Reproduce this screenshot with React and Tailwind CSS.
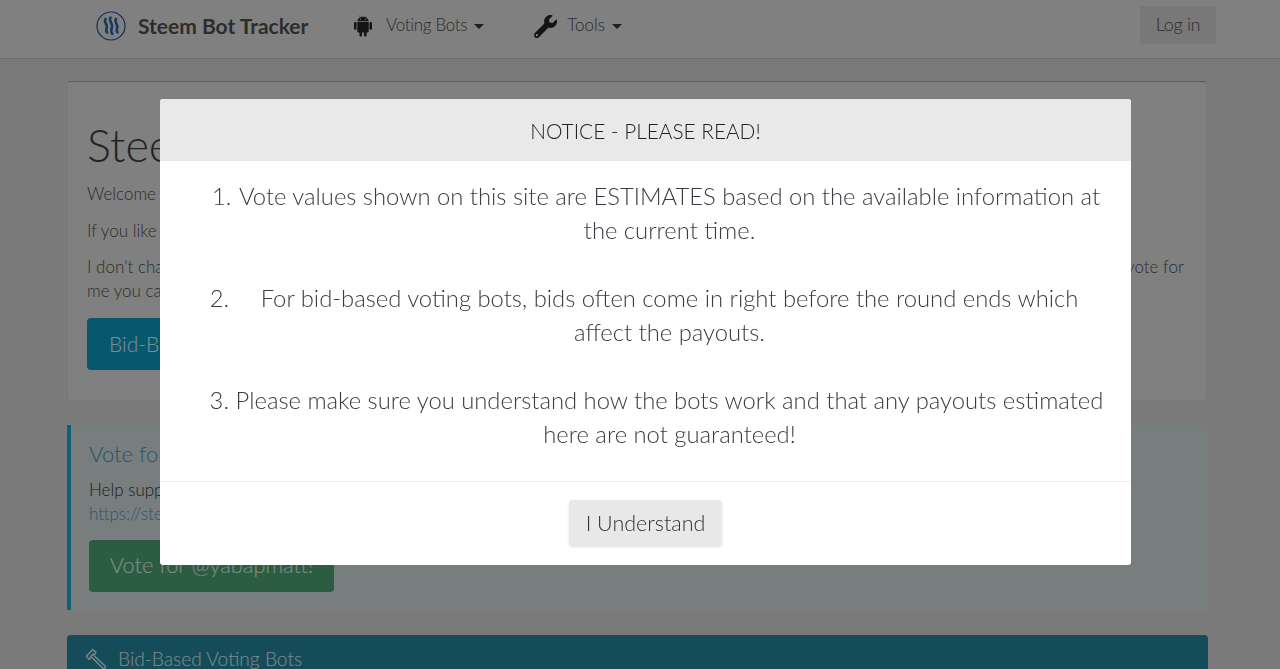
import { AiFillAndroid } from 'react-icons/ai'
import { FaWrench } from 'react-icons/fa'

function Caret() {
  return <span className="ml-[7px] inline-block border-x-[5px] border-t-[5px] border-x-transparent border-t-[#333] align-middle" />
}

function SteemLogo() {
  return (
    <svg viewBox="0 0 30 30" className="w-[30px] h-[30px]">
      <circle cx="15" cy="15" r="14" fill="none" stroke="#1f4f86" strokeWidth="1.2" />
      <g fill="none" stroke="#24609f" strokeLinecap="round" strokeWidth="2.600">
        <path d="M9.500 8c-2.500 3 3 6 1 9.500-.6 1.200-.4 2.500.6 4" />
        <path d="M14.500 6.500c-2.500 3.500 3.500 6.500 1.200 10.500-.8 1.600-.6 3.500.6 6" />
        <path d="M20 8c-2.500 3 3 6 1 9.500-.6 1.200-.4 2.500.6 4" />
      </g>
    </svg>
  )
}

function HammerIcon() {
  return (
    <svg viewBox="0 0 22 22" className="w-[22px] h-[22px]" fill="none" stroke="currentColor" strokeWidth="1.4" strokeLinejoin="round">
      <path d="M1.500 8 8 1.500l3 3-2.200 2.200-.8-.4-2.600 2.600.3.900L3.900 11.400z" />
      <path d="m9 7.500 11 10.500a1.500 1.500 0 0 1-2.200 2.200L7 9.500" />
    </svg>
  )
}

function Navbar() {
  return (
    <nav className="h-[59px] bg-[#d5d5d5] border-b border-[#b8b8b8] flex items-center pl-[96px] pr-[64px] pb-[6px] text-[17px] tracking-[-0.3px] text-[#4a4a4a]">
      <SteemLogo />
      <span className="ml-[12px] w-[215px] text-[21px] tracking-normal font-bold text-[#4b4b4b]">Steem Bot Tracker</span>
      <AiFillAndroid className="w-[24px] h-[26px] -ml-[2px] text-[#222]" />
      <span className="ml-[11px] -mt-[2px] font-light">Voting Bots</span>
      <Caret />
      <FaWrench className="ml-[50px] w-[23px] h-[23px] text-[#222]" />
      <span className="ml-[10px] -mt-[2px] font-light tracking-normal">Tools</span>
      <Caret />
      <button className="ml-auto -mt-[2px] w-[76px] h-[38px] pb-[1px] bg-[#c8c8c8] text-[18px] font-light text-[#4a4a4a]">Log in</button>
    </nav>
  )
}

function Jumbotron() {
  return (
    <section className="h-[320px] bg-[#d5d5d5] border border-x-[#c8c8c8] border-b-[#c8c8c8] border-t-[#40c0c0] rounded-sm px-[19px] pt-[33px] text-[#4b4b4b] text-[17px] leading-[24px] font-light">
      <h1 className="text-[45px] leading-[60px] text-[#3c3c3c] font-light">Steem Bot Tracker</h1>
      <p className="mt-[7px]">Welcome</p>
      <p className="mt-[13px]">If you like</p>
      <p className="mt-[12px] pr-[3px] flex justify-between"><span>I don't charge</span><span>vote for</span></p>
      <p>me you can</p>
      <button className="mt-[15px] w-[200px] h-[52px] text-left pl-[22px] bg-[#0c93ba] rounded text-[21px] text-white/80">Bid-Based</button>
    </section>
  )
}

function VoteAlert() {
  return (
    <section className="mt-[24px] w-[1142px] h-[185px] bg-[#c8d0d0] border-l-[4px] border-[#15a3c4] pl-[18px] pt-[14px] text-[17px] leading-[24px] font-light">
      <h4 className="text-[22px] leading-[30px] text-[#3a8fb0]">Vote for</h4>
      <p className="mt-[9px] text-[#333]">Help support</p>
      <a className="block text-[#4a93b8]">https://steemit.com</a>
      <button className="mt-[14px] w-[245px] h-[52px] pb-[2px] bg-[#4a9c6e] rounded text-[21.800px] text-white/80">Vote for @yabapmatt!</button>
    </section>
  )
}

function NoticeModal() {
  return (
    <div className="fixed inset-0 bg-black/40">
      <div className="absolute left-[160px] top-[99px] w-[971px] h-[466px] bg-white rounded-[3px] overflow-hidden text-[#3b3b43]">
        <div className="h-[62px] pt-[2px] bg-[#e9e9e9] flex items-center justify-center text-[20.800px] font-light text-[#222]">NOTICE - PLEASE READ!</div>
        <ol className="h-[321px] border-b border-[#eeeeee] pl-[48px] pt-[18px] text-center text-[23.800px] leading-[34px] font-light">
          <li className="mb-[34px]"><span className="absolute -ml-[27px]">1.</span>Vote values shown on this site are ESTIMATES based on the available information at<br />the current time.</li>
          <li className="mb-[34px]"><span className="absolute -ml-[51px]">2.</span>For bid-based voting bots, bids often come in right before the round ends which<br />affect the payouts.</li>
          <li><span className="absolute -ml-[26px]">3.</span>Please make sure you understand how the bots work and that any payouts estimated<br />here are not guaranteed!</li>
        </ol>
        <div className="flex justify-center pt-[18px]">
          <button className="w-[153px] h-[46px] bg-[#e8e8e8] rounded shadow-sm text-[21.500px] font-light text-[#333]">I Understand</button>
        </div>
      </div>
    </div>
  )
}

export default function App() {
  return (
    <div className="h-[669px] overflow-hidden bg-[#cbcbcb] font-['Lato',sans-serif]">
      <Navbar />
      <main className="w-[1140px] ml-[67px] pt-[22px]">
        <Jumbotron />
        <VoteAlert />
        <section className="mt-[25px] h-[80px] bg-[#237f95] rounded-t flex items-start pl-[18px] pt-[13px] text-white/80 text-[19.200px] leading-[22px] font-light w-[1141px]">
          <HammerIcon />
          <span className="ml-[11px]">Bid-Based Voting Bots</span>
        </section>
      </main>
      <NoticeModal />
    </div>
  )
}
